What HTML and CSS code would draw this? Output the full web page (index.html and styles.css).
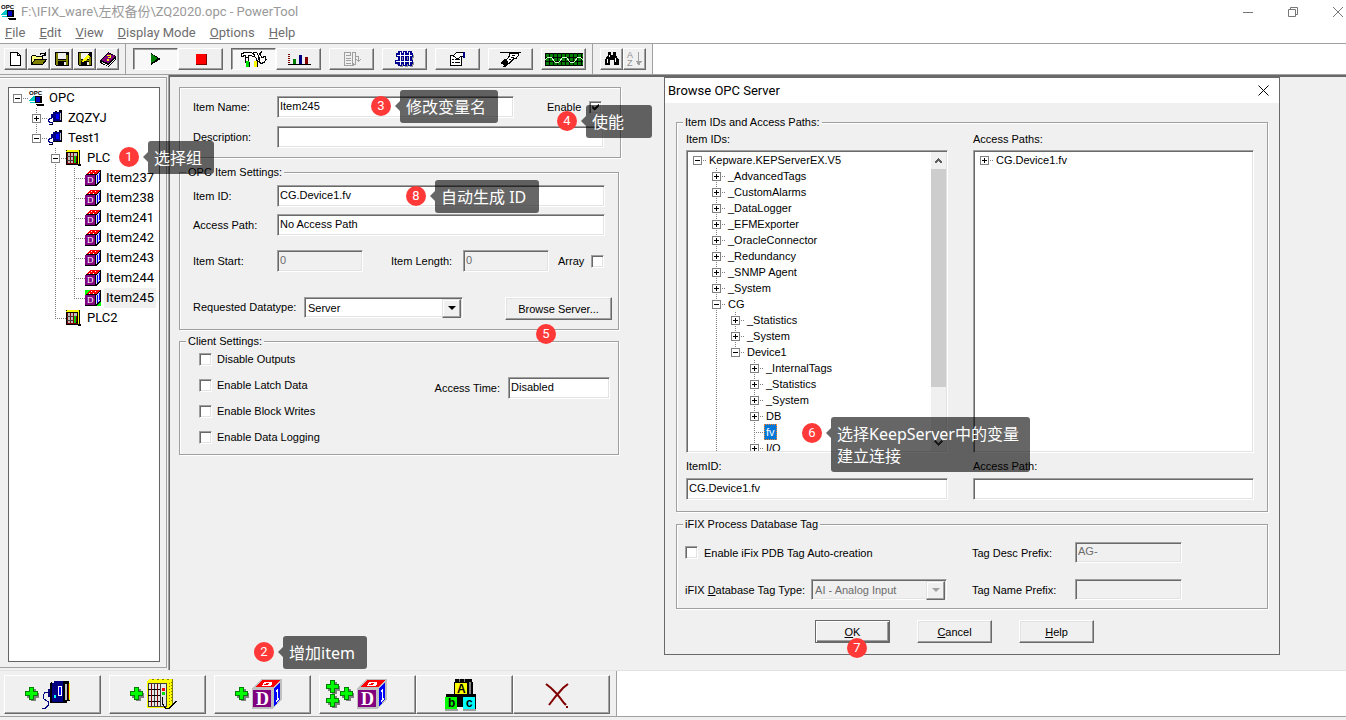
FILE: index.html
```html
<!DOCTYPE html>
<html lang="zh-CN">
<head>
    <meta charset="UTF-8">
    <meta name="viewport" content="width=device-width, initial-scale=1.0">
    <title>F:\IFIX_ware\左权备份\ZQ2020.opc - PowerTool</title>
    <link rel="stylesheet" href="styles.css">
</head>
<body>
    <!-- shared icons -->
    <svg class="defs" width="0" height="0">
        <symbol id="opc" viewBox="0 0 16 16">
            <path d="M1 11 5 6h2v3h1v2z" fill="#00c8c8"/>
            <path d="M7 6h7v7H7zM8 14h8v2H9z" fill="#000"/>
            <path d="M8 7h4v5H8z" fill="#0000c0"/>
            <path d="M2 12h5v1H2z" fill="#00c8c8"/>
        </symbol>
        <symbol id="plug" viewBox="0 0 16 16">
            <path d="M6 2h8v9H6zM4 4h2v4H4z" fill="#000080"/>
            <path d="M8 1h2v1H8zM12 0h3v12h-1V2h-2zM6 11h8v1H6z" fill="#000"/>
            <path d="M9 4h3v5H9z" fill="#00f"/>
            <path d="M13 3h1v7h-1z" fill="#c0c0c0"/>
            <path d="M5 8.500H3L1.500 10v1L3 12.500h2v2H2" fill="none" stroke="#000080"/>
            <path d="M3 14h3v1H3z" fill="#000"/>
        </symbol>
        <symbol id="rack" viewBox="0 0 16 16">
            <path d="M0 0h14v14l-1 1H0z" fill="#000"/>
            <path d="M0 1 1 0h12v13l-1 1V2H0z" fill="#ff0"/>
            <path d="M1 3h10v11H1z" fill="#800000"/>
            <path d="M2 3h2v10H2zM5 3h2v10H5zM8 3h3v3H8z" fill="#c0c0c0"/>
            <path d="M8 6h2v7H8z" fill="#0c0"/>
            <path d="M1 6.500h6M1 10.500h6" stroke="#404040" stroke-width="1"/>
            <path d="M10 12h2v2h3v2h-3z" fill="#000"/>
        </symbol>
        <symbol id="cube" viewBox="0 0 16 16">
            <path d="M0 5 5 0h11v11l-5 5H0z" fill="#000"/>
            <path d="M1 4 5 0h10l-4 4z" fill="#f00"/>
            <path d="M6 1h1v1H6zM10 1h1v1h-1zM4 3h1v1H4zM8 3h1v1H8z" fill="#fff"/>
            <path d="M0 5h10v10H0z" fill="#800080"/>
            <path d="M11 5 15 1v9l-4 5z" fill="#d0d8ff"/>
            <path d="M12 5h1v8h-1zM14 3h1v7h-1z" fill="#00f"/>
        </symbol>
        <symbol id="plus" viewBox="0 0 14 14">
            <path d="M5 2h6v4h3v5h-3v3H6v-3H2V6h3z" fill="#808080"/>
            <path d="M4 0h5v4h4v5H9v4H4V9H0V4h4z" fill="#008000"/>
            <path d="M5 1h3v4h4v3H8v4H5V8H1V5h4z" fill="#0f0"/>
        </symbol>
        <symbol id="bigcube" viewBox="0 0 30 30">
            <path d="M0 9 9 0h21v20L21 30H0z" fill="#c0c0c0"/>
            <path d="M3 8 10 1h18l-7 7z" fill="#f00"/>
            <path d="M12 3h7l2 1-2 1h1l-2 2h-8zM14 4l-1 1h3l1-1zM12 5l-1 1h4l1-1z" fill="#fff"/>
            <path d="M1 11h18v17H1z" fill="#800080"/>
            <path d="M22 10 28 3v17l-6 8z" fill="#00f"/>
            <path d="M24 12l2-3v10l1-1v2l-3 3v-2l1-1v-7h-1z" fill="#fff"/>
        </symbol>
        <symbol id="floppy" viewBox="0 0 14 14">
            <path d="M0 0h14v14H1L0 13z" fill="#000"/>
            <path d="M1 1h2v7h8V3h2v10H1z" fill="#808000"/>
            <path d="M3 1h8v6H3z" fill="#f0f0f0"/>
            <path d="M3 9h8v5H3z" fill="#000"/>
            <path d="M9 10h2v3H9z" fill="#f0f0f0"/>
        </symbol>
    </svg>

    <div class="app">
        <header class="titlebar">
            <svg class="icon16"><use href="#opc"/><text class="opc-text" x="1" y="5">OPC</text></svg>
            <span class="title-text">F:\IFIX_ware\左权备份\ZQ2020.opc - PowerTool</span>
            <div class="window-buttons">
                <button aria-label="Minimize"><svg width="10" height="10"><path d="M0 5.500h10" stroke="#777"/></svg></button>
                <button aria-label="Restore"><svg width="10" height="10" fill="none" stroke="#777"><path d="M.5 2.500h7v7h-7zM2.500 2.500v-2h7v7h-2"/></svg></button>
                <button aria-label="Close"><svg width="10" height="10" stroke="#777"><path d="M0 0 10 10M10 0 0 10"/></svg></button>
            </div>
        </header>

        <nav class="menubar">
            <a href="#"><u>F</u>ile</a>
            <a href="#"><u>E</u>dit</a>
            <a href="#"><u>V</u>iew</a>
            <a href="#"><u>D</u>isplay Mode</a>
            <a href="#"><u>O</u>ptions</a>
            <a href="#"><u>H</u>elp</a>
        </nav>

        <div class="toolbar">
            <div class="tool-group small">
                <button aria-label="New"><svg width="14" height="14"><path d="M1.500.5h7l3 3v10h-10z" fill="#fff" stroke="#000"/><path d="M8.500.5v3h3" fill="none" stroke="#000"/></svg></button>
                <button aria-label="Open"><svg width="16" height="14"><path d="M.5 12.500v-8l1-1h3l1 1h6v3" fill="#ffff80" stroke="#000"/><path d="M.5 12.500 4 7.500h11.500l-4 5z" fill="#808000" stroke="#000"/><path d="M9 2.500 10.500 1h2L14 2.500M14.500 0v4M11 3.500h4" fill="none" stroke="#000"/></svg></button>
                <button aria-label="Save"><svg width="14" height="14"><use href="#floppy"/></svg></button>
                <button aria-label="Save as"><svg width="14" height="14"><use href="#floppy"/><path d="M5 8 10 2l2 2-5 5-3 1z" fill="#ff0"/><path d="M9 2h4v4z" fill="#000"/></svg></button>
                <button aria-label="Help topics"><svg width="16" height="15"><path d="M0 9 8 0l8 4v3l-7 8-9-4z" fill="#000"/><path d="M1 8 8 1l7 3-7 7z" fill="#800080"/><path d="M2 10l6 3 7-7v1l-7 7-6-3z" fill="#fff"/><path d="M7 3h3v2H8v1M7 7h1v1H7" fill="none" stroke="#ff0"/></svg></button>
            </div>
            <div class="tool-group wide">
                <div class="joined">
                    <button class="pressed" aria-label="Run"><svg width="12" height="12"><path d="M1 0 11 6 1 12z" fill="#000"/><path d="M1 1 8 5 3 9 1 10z" fill="#008000"/></svg></button>
                    <button aria-label="Stop"><svg width="12" height="12"><path d="M1 1h11v11H1z" fill="#800000"/><path d="M1 1h10v10H1z" fill="#f00"/></svg></button>
                </div>
                <div class="joined">
                    <button class="pressed" aria-label="Configure"><svg width="26" height="16"><path d="M.5 2.500h2v-1h8l3 2v2h-2l-1-1h-3v2h-3v-2h-2v1h-2z" fill="#fff" stroke="#000"/><path d="M4.500 6.500h3v5h-3z" fill="#fff" stroke="#000"/><path d="M12.500 1.500h3l2 3 1 5-2 2-1-4-2-2zM19.500 1.500l-2 3v4l-2 3M21 .500l-2 3 2 3 3-1 1 3-2 3-3 1-2-2 1-4" fill="#fff" stroke="#000"/><path d="M5 10h3v6H5z" fill="#0d0"/><path d="M13 10h3v6h-3z" fill="#ff0"/><path d="M8 11h1v5H8zM16 11h1v5h-1z" fill="#000"/></svg></button>
                    <button aria-label="Statistics"><svg width="24" height="13"><path d="M1 1h2M1 3h2M1 5h2M1 7h2M1 9h2" stroke="#800000"/><path d="M1 11h23v1H1z" fill="#000"/><path d="M6 6h3v5H6z" fill="#008000"/><path d="M12 2h3v9h-3z" fill="#000080"/><path d="M18 4h3v7h-3z" fill="#800000"/></svg></button>
                </div>
                <button aria-label="Events"><svg width="18" height="16" fill="none" stroke="#a0a0a0"><path d="M1.500 14.500V1.500h6v2M1.500 14.500h9v-3M3 4.500h5M3 7.500h5M3 9.500h5M3 12.500h5M9.500 1.500h3v12h-3zM12 5.500h3v4M13 8l2.500 2.500L18 8"/></svg></button>
                <button aria-label="Channels"><svg width="20" height="16"><path d="M3 5h16M2 12h17M6 2v14M11 2v14M16 2v14" stroke="#909090" stroke-width="3"/><path d="M1 4h17M0 11h18M5 0v15M10 0v15M15 0v15" stroke="#000090" stroke-width="4"/><path d="M2 4.500h15M1 10.500h16M5.500 1v13M9.500 1v13M14.500 1v13" stroke="#fff" stroke-width="1"/></svg></button>
                <button aria-label="Properties"><svg width="18" height="16"><path d="M1.500 4.500h11v10h-11z" fill="#fff" stroke="#000"/><path d="M3 8.500h2M6 8.500h5M3 11.500h2M6 11.500h5" stroke="#000"/><path d="M4 5 8 1h6v4l-3 1-2 2z" fill="#fff" stroke="#000"/><path d="M14 1h2v6h-2z" fill="#000080"/></svg></button>
                <button aria-label="Hand tool"><svg width="22" height="16"><path d="M0 1.500h21" stroke="#000"/><path d="M9.500 2v3l-3 4v3h3l4-4 3-1 2-3V2z" fill="#fff" stroke="#000"/><path d="M1 11l4-3 3 3v2l-3 3H2l2-2-3-1z" fill="#000"/><path d="M12 4l3 1M11 6l3 1M9 8l2 1" stroke="#000"/></svg></button>
                <button aria-label="Monitor"><svg width="38" height="13"><path d="M0 0h38v13H0z" fill="#000"/><path d="M1 2h37M1 6h37M1 10h37" stroke="#008000" stroke-width="3" stroke-dasharray="3 1"/><path d="M0 7 3 4h3l4 5h4l4-5h3l4 5h4l4-5h2l3 3" fill="none" stroke="#cfc"/></svg></button>
            </div>
            <div class="tool-group small find">
                <button aria-label="Find"><svg width="16" height="14"><path d="M4 0h3v3h2V0h3v3l3 5v5h-5V8H6v5H1V8l3-5z" fill="#000"/><path d="M3 7h1v4H3zM11 6h1v4h-1zM5 3h1v2H5z" fill="#fff"/></svg></button>
                <button aria-label="Sort"><svg width="16" height="16"><text x="0" y="7" font-size="9" font-family="Liberation Sans, sans-serif" fill="#909090">A</text><text x="0" y="15" font-size="9" font-family="Liberation Sans, sans-serif" fill="#909090">Z</text><path d="M11.500 1v13" stroke="#a0a0a0"/><path d="M9 10h6l-3 5z" fill="#a0a0a0"/></svg></button>
            </div>
        </div>

        <main class="workspace">
            <aside class="side">
                <ul class="tree nav-tree">
                    <li>
                        <div class="row"><i class="exp minus"></i><svg class="icon16"><use href="#opc"/><text class="opc-text" x="1" y="5">OPC</text></svg><span>OPC</span></div>
                        <ul>
                            <li><div class="row"><i class="exp plus"></i><svg class="icon16"><use href="#plug"/></svg><span>ZQZYJ</span></div></li>
                            <li>
                                <div class="row"><i class="exp minus"></i><svg class="icon16"><use href="#plug"/></svg><span>Test1</span></div>
                                <ul>
                                    <li>
                                        <div class="row"><i class="exp minus"></i><svg class="icon16"><use href="#rack"/></svg><span>PLC</span></div>
                                        <ul>
                                            <li><div class="row"><i class="exp"></i><svg class="icon16"><use href="#cube"/><text class="cube-text" x="2" y="13">D</text></svg><span>Item237</span></div></li>
                                            <li><div class="row"><i class="exp"></i><svg class="icon16"><use href="#cube"/><text class="cube-text" x="2" y="13">D</text></svg><span>Item238</span></div></li>
                                            <li><div class="row"><i class="exp"></i><svg class="icon16"><use href="#cube"/><text class="cube-text" x="2" y="13">D</text></svg><span>Item241</span></div></li>
                                            <li><div class="row"><i class="exp"></i><svg class="icon16"><use href="#cube"/><text class="cube-text" x="2" y="13">D</text></svg><span>Item242</span></div></li>
                                            <li><div class="row"><i class="exp"></i><svg class="icon16"><use href="#cube"/><text class="cube-text" x="2" y="13">D</text></svg><span>Item243</span></div></li>
                                            <li><div class="row"><i class="exp"></i><svg class="icon16"><use href="#cube"/><text class="cube-text" x="2" y="13">D</text></svg><span>Item244</span></div></li>
                                            <li><div class="row current"><i class="exp"></i><svg class="icon16"><use href="#cube"/><text class="cube-text" x="2" y="13">D</text></svg><span>Item245</span></div></li>
                                        </ul>
                                    </li>
                                    <li><div class="row"><i class="exp"></i><svg class="icon16"><use href="#rack"/></svg><span>PLC2</span></div></li>
                                </ul>
                            </li>
                        </ul>
                    </li>
                </ul>
            </aside>

            <section class="pane">
                <form class="item-form">
                    <div class="group group-name">
                        <div class="line">
                            <label class="lead" for="item-name">Item Name:</label>
                            <input class="field name" id="item-name" type="text" value="Item245">
                            <label class="enable" for="enable">Enable</label>
                            <input id="enable" type="checkbox" checked>
                        </div>
                        <div class="line">
                            <label class="lead" for="description">Description:</label>
                            <input class="field long" id="description" type="text">
                        </div>
                    </div>

                    <fieldset class="group group-opc">
                        <legend>OPC Item Settings:</legend>
                        <div class="opc-body">
                            <div class="line">
                                <label class="lead" for="item-id">Item ID:</label>
                                <input class="field long" id="item-id" type="text" value="CG.Device1.fv">
                            </div>
                            <div class="line">
                                <label class="lead" for="access-path">Access Path:</label>
                                <input class="field long" id="access-path" type="text" value="No Access Path">
                            </div>
                            <div class="line start">
                                <label class="lead" for="item-start">Item Start:</label>
                                <input class="field short" id="item-start" type="text" value="0" disabled>
                                <label class="length" for="item-length">Item Length:</label>
                                <input class="field short" id="item-length" type="text" value="0" disabled>
                                <label class="array" for="array">Array</label>
                                <input id="array" type="checkbox">
                            </div>
                            <div class="line type">
                                <label for="datatype">Requested Datatype:</label>
                                <span class="combo"><select id="datatype"><option>Server</option></select></span>
                                <button class="btn browse" type="button">Browse Server...</button>
                            </div>
                        </div>
                    </fieldset>

                    <fieldset class="group group-client">
                        <legend>Client Settings:</legend>
                        <div class="client">
                            <div class="checks">
                                <label><input type="checkbox">Disable Outputs</label>
                                <label><input type="checkbox">Enable Latch Data</label>
                                <label><input type="checkbox">Enable Block Writes</label>
                                <label><input type="checkbox">Enable Data Logging</label>
                            </div>
                            <div class="line">
                                <label for="access-time">Access Time:</label>
                                <input class="field time" id="access-time" type="text" value="Disabled">
                            </div>
                        </div>
                    </fieldset>
                </form>

                <!-- Browse dialog -->
                <div class="dialog" role="dialog" aria-label="Browse OPC Server">
                    <div class="dialog-title">
                        <span>Browse OPC Server</span>
                        <button aria-label="Close"><svg width="11" height="11" stroke="#000"><path d="M.5.5 10.500 10.500M10.500.5.5 10.500"/></svg></button>
                    </div>
                    <div class="dialog-body">
                        <fieldset class="group group-ids">
                            <legend>Item IDs and Access Paths:</legend>
                            <div class="lists">
                                <div class="ids">
                                    <div class="caption">Item IDs:</div>
                                    <div class="listbox">
                                        <ul class="tree id-tree">
                                            <li>
                                                <div class="row"><i class="exp minus"></i><span>Kepware.KEPServerEX.V5</span></div>
                                                <ul>
                                                    <li><div class="row"><i class="exp plus"></i><span>_AdvancedTags</span></div></li>
                                                    <li><div class="row"><i class="exp plus"></i><span>_CustomAlarms</span></div></li>
                                                    <li><div class="row"><i class="exp plus"></i><span>_DataLogger</span></div></li>
                                                    <li><div class="row"><i class="exp plus"></i><span>_EFMExporter</span></div></li>
                                                    <li><div class="row"><i class="exp plus"></i><span>_OracleConnector</span></div></li>
                                                    <li><div class="row"><i class="exp plus"></i><span>_Redundancy</span></div></li>
                                                    <li><div class="row"><i class="exp plus"></i><span>_SNMP Agent</span></div></li>
                                                    <li><div class="row"><i class="exp plus"></i><span>_System</span></div></li>
                                                    <li class="more">
                                                        <div class="row"><i class="exp minus"></i><span>CG</span></div>
                                                        <ul>
                                                            <li><div class="row"><i class="exp plus"></i><span>_Statistics</span></div></li>
                                                            <li><div class="row"><i class="exp plus"></i><span>_System</span></div></li>
                                                            <li>
                                                                <div class="row"><i class="exp minus"></i><span>Device1</span></div>
                                                                <ul>
                                                                    <li><div class="row"><i class="exp plus"></i><span>_InternalTags</span></div></li>
                                                                    <li><div class="row"><i class="exp plus"></i><span>_Statistics</span></div></li>
                                                                    <li><div class="row"><i class="exp plus"></i><span>_System</span></div></li>
                                                                    <li><div class="row"><i class="exp plus"></i><span>DB</span></div></li>
                                                                    <li><div class="row selected"><i class="exp"></i><span>fv</span></div></li>
                                                                    <li><div class="row"><i class="exp plus"></i><span>I/O</span></div></li>
                                                                </ul>
                                                            </li>
                                                        </ul>
                                                    </li>
                                                </ul>
                                            </li>
                                        </ul>
                                        <div class="scrollbar">
                                            <svg width="15" height="17" fill="none" stroke="#606060" stroke-width="2"><path d="M4 11 7.500 7.500 11 11"/></svg>
                                            <div class="thumb"></div>
                                            <svg width="15" height="17" fill="none" stroke="#404040" stroke-width="2"><path d="M4 7 7.500 10.500 11 7"/></svg>
                                        </div>
                                    </div>
                                    <label class="caption" for="dlg-id">ItemID:</label>
                                    <input class="field" id="dlg-id" type="text" value="CG.Device1.fv">
                                </div>
                                <div class="paths">
                                    <div class="caption">Access Paths:</div>
                                    <div class="listbox">
                                        <ul class="tree id-tree">
                                            <li><div class="row"><i class="exp plus"></i><span>CG.Device1.fv</span></div></li>
                                        </ul>
                                    </div>
                                    <label class="caption" for="dlg-path">Access Path:</label>
                                    <input class="field" id="dlg-path" type="text">
                                </div>
                            </div>
                        </fieldset>

                        <fieldset class="group group-tag">
                            <legend>iFIX Process Database Tag</legend>
                            <div class="tag-grid">
                                <label class="auto"><input type="checkbox">Enable iFix PDB Tag Auto-creation</label>
                                <label for="desc-prefix">Tag Desc Prefix:</label>
                                <input class="field" id="desc-prefix" type="text" value="AG-" disabled>
                                <div class="tag-type">
                                    <label for="tag-type">iFIX <u>D</u>atabase Tag Type:</label>
                                    <span class="combo"><select id="tag-type" disabled><option>AI - Analog Input</option></select></span>
                                </div>
                                <label for="name-prefix">Tag Name Prefix:</label>
                                <input class="field" id="name-prefix" type="text" disabled>
                            </div>
                        </fieldset>

                        <div class="dialog-buttons">
                            <button class="btn default"><span><u>O</u>K</span></button>
                            <button class="btn"><span><u>C</u>ancel</span></button>
                            <button class="btn"><span><u>H</u>elp</span></button>
                        </div>
                    </div>
                </div>
            </section>
        </main>

        <footer class="actions">
            <div class="action-group">
                <button aria-label="Add channel"><svg width="84" height="32">
                    <use href="#plus" x="14" y="8" width="14" height="14"/>
                    <path d="M41 4h2V2h9v2h1v20H41zM37 10h4v8h-4z" fill="#000080"/>
                    <path d="M40 3h1v20h12v1H39V4zM52 2h6v4h1v16h-3v2h-4z" fill="#000"/>
                    <path d="M54 5h2v16h-2z" fill="#c0c0c0"/><path d="M57 5h1v15h-1z" fill="#800000"/><path d="M58 4h1v17h-1z" fill="#ff0"/>
                    <path d="M47.500 7.500h3v9h-3z" fill="#00f" stroke="#fff"/>
                    <path d="M43 16h2v3h-2z" fill="#0ff"/>
                    <path d="M38 13.500h-4l-2 3v3l5 3v4l-3 3h-3" fill="none" stroke="#000080"/>
                </svg></button>
                <button aria-label="Add device"><svg width="84" height="32">
                    <use href="#plus" x="14" y="8" width="14" height="14"/>
                    <path d="M32 3l3-3h22v26l-3 3H32z" fill="#808000"/>
                    <path d="M31 2 33 0h3v1h2V0h3v1h2V0h3v1h2V0h3v1h2V0h3v26l-3 3H31z" fill="#ff0"/>
                    <path d="M32 4h19v24H32z" fill="#404040"/>
                    <path d="M33 5h5v22h-5zM39 5h5v22h-5zM45 5h5v22h-5z" fill="#e8e8e8"/>
                    <path d="M32 10.500h12M32 16.500h12M32 22.500h12" stroke="#000"/>
                    <path d="M35.500 5v22M41.500 5v22" stroke="#800000"/>
                    <path d="M46 9h3v3h-3z" fill="#f00"/><path d="M46 13h3v3h-3z" fill="#0d0"/>
                    <path d="M53 4v22M55 3v20" stroke="#808000" stroke-dasharray="1 2"/>
                    <path d="M46.500 18v7l3 4h4l7-7" fill="none" stroke="#000"/>
                </svg></button>
                <button aria-label="Add item"><svg width="84" height="32">
                    <use href="#plus" x="14" y="8" width="14" height="14"/>
                    <use href="#bigcube" x="31" y="0" width="30" height="30"/>
                    <text class="big-text" x="35" y="26">D</text>
                </svg></button>
            </div>
            <div class="action-group tight">
                <button aria-label="Add several items"><svg width="84" height="32">
                    <use href="#plus" x="0" y="1" width="14" height="14"/>
                    <use href="#plus" x="0" y="15" width="14" height="14"/>
                    <use href="#plus" x="14" y="8" width="14" height="14"/>
                    <use href="#bigcube" x="31" y="0" width="30" height="30"/>
                    <text class="big-text" x="35" y="26">D</text>
                </svg></button>
                <button aria-label="Tag names"><svg width="84" height="32">
                    <path d="M32 0h17v3h1v12h3v15H40v-2H23V15h8V3h1z" fill="#000"/>
                    <path d="M32 4h12v11H32z" fill="#ff0"/><path d="M46 3h2v12h-2zM36 0h1v3h-1zM41 0h1v3h-1z" fill="#808080"/>
                    <path d="M22 18h12v12H22z" fill="#0f0"/><path d="M40 18h12v12H40z" fill="#0ff"/>
                    <path d="M22 30h13v2H22zM40 30h13v2H40z" fill="#a0a0a0"/>
                    <g font-size="12" font-weight="bold" font-family="Liberation Sans, sans-serif" fill="#000"><text x="34" y="14">A</text><text x="25" y="28">b</text><text x="43" y="28">c</text></g>
                </svg></button>
                <button aria-label="Delete"><svg class="smooth" width="84" height="32" fill="none" stroke="#800000" stroke-width="2">
                    <path d="M26 5 31 9 37 15 44 24 46 26M48 5 43 9 36 17 29 26"/><path d="M47 27v2"/>
                </svg></button>
            </div>
        </footer>
    </div>

    <!-- step marks laid over the window -->
    <div class="mark m1"><b>1</b><span class="tip">选择组</span></div>
    <div class="mark m2"><b>2</b><span class="tip">增加item</span></div>
    <div class="mark m3"><b>3</b><span class="tip">修改变量名</span></div>
    <div class="mark m4"><b>4</b><span class="tip">使能</span></div>
    <div class="mark m5"><b>5</b></div>
    <div class="mark m6"><b>6</b><span class="tip">选择KeepServer中的变量<br>建立连接</span></div>
    <div class="mark m7"><b>7</b></div>
    <div class="mark m8"><b>8</b><span class="tip">自动生成 ID</span></div>
</body>
</html>
```
FILE: styles.css
```css
* {
    box-sizing: border-box;
}

body {
    margin: 0;
    position: relative;
    overflow: hidden;
    background: #f0f0f0;
    color: #000;
    font: 11px/14px "Liberation Sans", "Noto Sans CJK SC", sans-serif;
}

button, input, select {
    font: inherit;
    color: inherit;
    margin: 0;
    padding: 0;
    border-radius: 0;
}

ul {
    list-style: none;
    margin: 0;
    padding: 0;
}

svg {
    display: block;
    flex: none;
    overflow: visible;
    shape-rendering: crispEdges;
}

svg.smooth {
    shape-rendering: auto;
}

.defs {
    position: absolute;
}

.icon16 {
    width: 16px;
    height: 16px;
}

.opc-text {
    font: bold 6px "Liberation Sans", sans-serif;
}

.cube-text {
    font: 9px "Liberation Serif", serif;
    fill: #fff;
}

.big-text {
    font: bold 18px "Liberation Serif", serif;
    fill: #fff;
}

.app {
    display: flex;
    flex-direction: column;
    height: 100vh;
}

/* title and menu */
.titlebar {
    display: flex;
    align-items: center;
    height: 24px;
    padding: 0 3px 0 0;
    background: #fff;
    color: #999;
    font: 13px/20px Roboto, "Noto Sans CJK SC", sans-serif;
}

.title-text {
    margin-left: 5px;
}

.window-buttons {
    display: flex;
    gap: 35px;
    margin-left: auto;
}

.window-buttons button, .dialog-title button {
    border: none;
    background: none;
}

.window-buttons svg, .dialog-title svg {
    shape-rendering: auto;
}

.menubar {
    display: flex;
    gap: 14px;
    height: 19px;
    padding-left: 5px;
    background: #fff;
    font: 13px/18px Roboto, sans-serif;
}

.menubar a {
    color: #6d6d6d;
    text-decoration: none;
}

/* toolbar */
.toolbar {
    display: flex;
    height: 32px;
    background: #fff;
    border-top: 1px solid #a0a0a0;
    border-bottom: 1px solid #a0a0a0;
    flex: none;
}

.tool-group {
    display: flex;
    align-items: flex-start;
    padding: 4px 6px 0 7px;
    background: #f0f0f0;
    border-right: 1px solid #a0a0a0;
}

.tool-group.small {
    gap: 0;
    padding-left: 4px;
}

.tool-group.wide {
    gap: 8px;
}

.tool-group.find {
    padding-left: 7px;
}

.joined {
    display: flex;
}

.toolbar button, .actions button {
    display: flex;
    align-items: center;
    justify-content: center;
    width: 23px;
    height: 22px;
    background: #f0f0f0;
    border: 1px solid;
    border-color: #fff #696969 #696969 #fff;
    box-shadow: inset -1px -1px 0 #a0a0a0;
}

.tool-group.wide button {
    width: 45px;
}

.toolbar button.pressed {
    background: #f8f8f8;
    border-color: #696969 #fff #fff #696969;
    box-shadow: inset 1px 1px 0 #a0a0a0;
}

/* main area */
.workspace {
    display: flex;
    flex: 1;
    min-height: 0;
}

.side {
    width: 167px;
    display: flex;
    margin: 2px 2px 2px 0;
    padding: 9px 6px 5px 8px;
    border: 1px solid #a0a0a0;
    border-left: none;
    box-shadow: inset 0 1px 0 #fff;
    flex: none;
}

.pane {
    flex: 1;
    position: relative;
    border-top: 2px solid #696969;
    border-left: 1px solid #696969;
    box-shadow: -1px 0 0 #a0a0a0;
    padding: 10px 9px;
}

/* trees */
.tree ul {
    padding-left: 19px;
}

.tree i {
    width: 9px;
    height: 9px;
    flex: none;
}

.tree i.minus, .tree i.plus {
    border: 1px solid #808080;
    background: linear-gradient(#000, #000) center / 5px 1px no-repeat #fff;
}

.tree i.plus {
    background: linear-gradient(#000, #000) center / 5px 1px no-repeat, linear-gradient(#000, #000) center / 1px 5px no-repeat #fff;
}

.tree .row {
    display: flex;
    align-items: center;
}

.tree ul li {
    background: repeating-linear-gradient(#808080 0 1px, transparent 1px 2px) 8px 0 / 1px 100% no-repeat;
}

.tree ul li:last-child {
    background-size: 1px 10px;
}

.nav-tree {
    flex: 1;
    border: 1px solid #646464;
    background: #fff;
    font: 13px/20px Roboto, sans-serif;
}

.nav-tree .row {
    height: 20px;
    padding-left: 4px;
    background: repeating-linear-gradient(90deg, #808080 0 1px, transparent 1px 2px) 8px 10px / 11px 1px no-repeat;
}

.nav-tree svg {
    margin-left: 6px;
}

.nav-tree span {
    margin-left: 3px;
    padding: 0 2px;
}

.nav-tree .current span {
    background: #f0f0f0;
}

.nav-tree .current svg {
    background: #0f0;
}

.id-tree {
    flex: 1;
}

.id-tree .row {
    height: 16px;
    padding-left: 5px;
    line-height: 16px;
    background: repeating-linear-gradient(90deg, #808080 0 1px, transparent 1px 2px) 9px 8px / 9px 1px no-repeat;
}

.id-tree span {
    margin-left: 5px;
    padding: 0 2px;
}

.id-tree ul li {
    background-position: 9px 0;
}

.id-tree ul li:last-child {
    background-size: 1px 8px;
}

.id-tree ul li.more:last-child {
    background-size: 1px 100%;
}

.id-tree .selected span {
    background: #0078d7;
    color: #fff;
    outline: 1px dotted #ff8728;
    outline-offset: -1px;
}

/* form controls */
.group {
    min-width: 0;
    margin: 0;
    padding: 0;
    border: 1px solid #a0a0a0;
    box-shadow: 1px 1px 0 #fff, inset 1px 1px 0 #fff;
}

legend {
    margin-left: 6px;
    padding: 0 2px;
    background: #f0f0f0;
    line-height: 14px;
}

.line {
    display: flex;
    align-items: center;
}

.field {
    height: 22px;
    padding: 0 2px 3px;
    background: #fff;
    border: 1px solid;
    border-color: #a0a0a0 #fff #fff #a0a0a0;
    box-shadow: inset 1px 1px 0 #696969, inset -1px -1px 0 #e3e3e3;
    min-width: 0;
}

.field:disabled {
    background: #f0f0f0;
    color: #6d6d6d;
}

input[type="checkbox"] {
    appearance: none;
    width: 13px;
    height: 13px;
    flex: none;
    background: #fff;
    border: 1px solid;
    border-color: #a0a0a0 #fff #fff #a0a0a0;
    box-shadow: inset 1px 1px 0 #696969, inset -1px -1px 0 #e3e3e3;
}

input[type="checkbox"]:checked::before {
    content: "";
    display: block;
    width: 7px;
    height: 7px;
    margin: 2px;
    background: #000;
    clip-path: polygon(0 30%, 35% 60%, 100% 0, 100% 40%, 35% 100%, 0 70%);
}

.btn {
    display: flex;
    align-items: center;
    justify-content: center;
    height: 23px;
    background: #f0f0f0;
    border: 1px solid;
    border-color: #fff #696969 #696969 #fff;
    box-shadow: inset -1px -1px 0 #a0a0a0, inset 1px 1px 0 #e3e3e3;
}

.btn.default {
    border-color: #696969;
    box-shadow: inset 1px 1px 0 #fff, inset -1px -1px 0 #696969, inset -2px -2px 0 #a0a0a0;
}

.combo {
    position: relative;
    display: flex;
}

.combo select {
    appearance: none;
    width: 100%;
    height: 21px;
    padding: 0 20px 0 3px;
    background: #fff;
    border: 1px solid;
    border-color: #a0a0a0 #fff #fff #a0a0a0;
    box-shadow: inset 1px 1px 0 #696969, inset -1px -1px 0 #e3e3e3;
}

.combo select:disabled {
    background: #f0f0f0;
    color: #6d6d6d;
    opacity: 1;
}

.combo::before {
    content: "";
    position: absolute;
    right: 2px;
    top: 2px;
    width: 17px;
    height: 17px;
    background: #f0f0f0;
    border: 1px solid;
    border-color: #e3e3e3 #696969 #696969 #e3e3e3;
    box-shadow: inset -1px -1px 0 #a0a0a0, inset 1px 1px 0 #fff;
    pointer-events: none;
    z-index: 1;
}

.combo::after {
    content: "";
    position: absolute;
    right: 7px;
    top: 9px;
    border: 4px solid transparent;
    border-top-color: #000;
    border-bottom: none;
    pointer-events: none;
    z-index: 1;
}

.combo:has(:disabled)::after {
    border-top-color: #a0a0a0;
}

/* item form */
.item-form {
    width: 442px;
}

.item-form fieldset {
    margin-right: 2px;
}

.lead {
    width: 84px;
}

.long {
    width: 328px;
}

.short {
    width: 86px;
}

.group-name {
    display: flex;
    flex-direction: column;
    gap: 8px;
    padding: 8px 13px 9px;
}

.group-name .name {
    width: 237px;
}

.group-name .long {
    width: 327px;
}

.enable {
    margin: 0 8px 0 33px;
}

.group-opc {
    margin-top: 7px;
}

.opc-body {
    padding: 6px 6px 9px 13px;
}

.opc-body .line + .line {
    margin-top: 7px;
}

.opc-body .line.start {
    margin-top: 14px;
}

.opc-body .line.type {
    margin-top: 25px;
    align-items: flex-start;
}

.line.type label {
    width: 111px;
    line-height: 20px;
}

.line.type .combo {
    width: 159px;
}

.browse {
    width: 107px;
    margin-left: auto;
}

.length {
    width: 72px;
    margin-left: 28px;
}

.array {
    margin: 0 7px 0 9px;
}

.group-client {
    margin-top: 4px;
}

.client {
    display: flex;
    justify-content: space-between;
    padding: 0 8px 6px 19px;
}

.client .line {
    align-self: flex-start;
    margin-top: 29px;
    gap: 8px;
}

.checks {
    display: grid;
    gap: 4px;
}

.checks label {
    display: flex;
    align-items: center;
    gap: 5px;
    height: 22px;
}

.time {
    width: 102px;
}

/* dialog */
.dialog {
    position: absolute;
    left: 494px;
    top: 0;
    width: 616px;
    border: 1px solid #696969;
    background: #f0f0f0;
}

.dialog-title {
    display: flex;
    align-items: center;
    justify-content: space-between;
    height: 25px;
    padding: 0 10px 0 3px;
    background: #fff;
    font: 13px/24px Roboto, sans-serif;
}

.dialog-body {
    padding: 12px 11px 11px;
}

.lists {
    display: flex;
    gap: 25px;
    padding: 3px 13px 11px 9px;
}

.ids, .paths {
    display: flex;
    flex-direction: column;
}

.ids {
    width: 262px;
}

.paths {
    flex: 1;
}

.caption {
    line-height: 14px;
}

.listbox {
    display: flex;
    align-items: flex-start;
    height: 303px;
    margin: 4px 0 6px;
    overflow: hidden;
    background: #fff;
    border: 1px solid;
    border-color: #a0a0a0 #fff #fff #a0a0a0;
    box-shadow: inset 1px 1px 0 #696969, inset -1px -1px 0 #e3e3e3;
    padding: 1px;
}

.listbox .id-tree {
    overflow: hidden;
    height: 299px;
}

.listbox + .caption {
    margin-bottom: 5px;
}

.scrollbar {
    display: flex;
    flex-direction: column;
    width: 15px;
    height: 299px;
    background: #f0f0f0;
}

.thumb {
    height: 218px;
    margin-bottom: auto;
    background: #cdcdcd;
}

.group-tag {
    margin-top: 5px;
}

.tag-grid {
    display: grid;
    grid-template-columns: 1fr 103px 107px;
    row-gap: 16px;
    align-items: center;
    padding: 11px 85px 8px 8px;
}

.tag-grid .field {
    height: 21px;
}

.auto, .tag-type {
    display: flex;
    align-items: center;
    gap: 6px;
}

.tag-type .combo {
    width: 136px;
}

.dialog-buttons {
    display: flex;
    justify-content: center;
    gap: 27px;
    margin-top: 11px;
    padding-right: 35px;
}

.dialog-buttons .btn {
    width: 75px;
}

/* bottom bar */
.actions {
    display: flex;
    height: 50px;
    flex: none;
    background: #fff;
    border-top: 1px solid #e3e3e3;
    border-bottom: 3px solid #f0f0f0;
    box-shadow: inset 0 -1px 0 #a0a0a0;
}

.action-group {
    display: flex;
    gap: 8px;
    padding: 4px 0 0 4px;
    background: #f0f0f0;
    border-bottom: 1px solid #a0a0a0;
}

.action-group.tight {
    gap: 0;
    padding: 4px 6px 0 8px;
    border-right: 1px solid #a0a0a0;
}

.actions button {
    width: 97px;
    height: 39px;
}

/* step marks */
.mark {
    position: absolute;
    z-index: 2;
    display: flex;
    align-items: flex-start;
    gap: 9px;
    color: #fff;
    font: 16px/22px "Noto Sans", "Noto Sans CJK SC", sans-serif;
}

.mark b {
    width: 20px;
    height: 20px;
    margin-top: 6px;
    border-radius: 50%;
    background: #ff3838;
    font: 13px/20px Roboto, sans-serif;
    text-align: center;
}

.tip {
    position: relative;
    padding: 6px 5px 5px 6px;
    border-radius: 3px;
    background: rgba(0, 0, 0, 0.6);
    white-space: nowrap;
}

.tip::before {
    content: "";
    position: absolute;
    left: -5px;
    top: 11px;
    border: 5px solid transparent;
    border-right-color: rgba(0, 0, 0, 0.6);
    border-left: none;
}

.m1 { left: 119px; top: 141px; }
.m2 { left: 254px; top: 636px; }
.m3 { left: 371px; top: 90px; }
.m4 { left: 557px; top: 105px; }
.m5 { left: 536px; top: 318px; }
.m6 { left: 802px; top: 417px; }
.m7 { left: 847px; top: 632px; }
.m8 { left: 406px; top: 180px; }

.m1 .tip { min-width: 66px; }
.m2 .tip { min-width: 84px; }
.m3 .tip { min-width: 98px; }
.m4 .tip { min-width: 66px; }
.m6 .tip { min-width: 199px; }
.m8 .tip { min-width: 104px; }
```
